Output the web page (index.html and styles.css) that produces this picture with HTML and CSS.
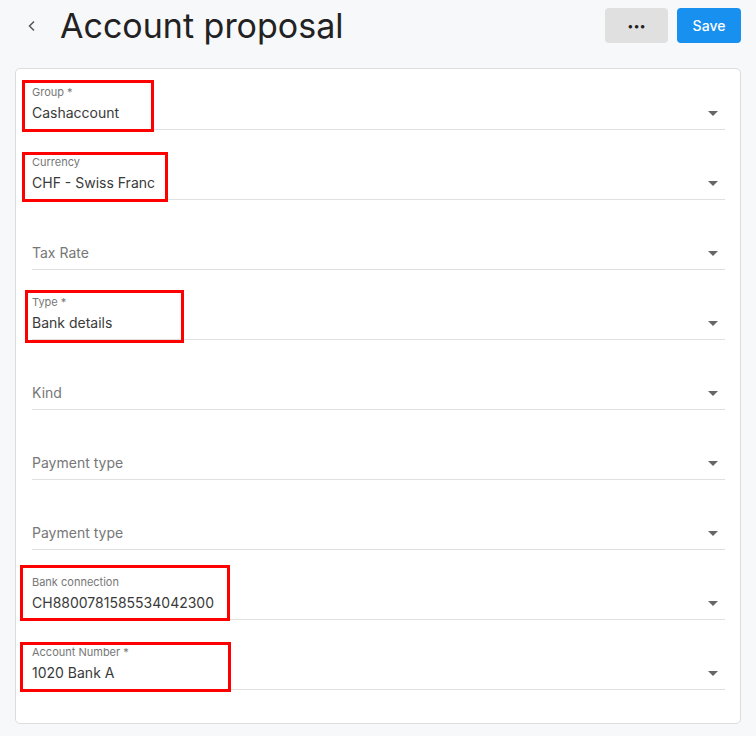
FILE: index.html
```html
<!DOCTYPE html>
<html lang="en">
<head>
    <meta charset="UTF-8">
    <meta name="viewport" content="width=device-width, initial-scale=1.0">
    <title>Account proposal</title>
    <link rel="stylesheet" href="styles.css">
</head>
<body>
    <div class="topbar">
        <div class="title-wrap">
            <span class="back">
                <svg width="10" height="12" viewBox="0 0 10 12"><path d="M7 1.5 L2.5 6 L7 10.5" fill="none" stroke="#555" stroke-width="1.5"/></svg>
            </span>
            <h1>Account proposal</h1>
        </div>
        <div class="actions">
            <button class="btn btn-more">&bull;&bull;&bull;</button>
            <button class="btn btn-save">Save</button>
        </div>
    </div>
    <div class="card">
        <div class="field">
            <div class="mark mark-1"></div>
            <div class="label">Group *</div>
            <div class="value">Cashaccount</div>
            <span class="arrow"></span>
        </div>
        <div class="field">
            <div class="mark mark-2"></div>
            <div class="label">Currency</div>
            <div class="value">CHF - Swiss Franc</div>
            <span class="arrow"></span>
        </div>
        <div class="field">
            <div class="label"></div>
            <div class="value empty">Tax Rate</div>
            <span class="arrow"></span>
        </div>
        <div class="field">
            <div class="mark mark-3"></div>
            <div class="label">Type *</div>
            <div class="value">Bank details</div>
            <span class="arrow"></span>
        </div>
        <div class="field">
            <div class="label"></div>
            <div class="value empty">Kind</div>
            <span class="arrow"></span>
        </div>
        <div class="field">
            <div class="label"></div>
            <div class="value empty">Payment type</div>
            <span class="arrow"></span>
        </div>
        <div class="field">
            <div class="label"></div>
            <div class="value empty">Payment type</div>
            <span class="arrow"></span>
        </div>
        <div class="field">
            <div class="mark mark-4"></div>
            <div class="label">Bank connection</div>
            <div class="value">CH8800781585534042300</div>
            <span class="arrow"></span>
        </div>
        <div class="field">
            <div class="mark mark-5"></div>
            <div class="label">Account Number *</div>
            <div class="value">1020 Bank A</div>
            <span class="arrow"></span>
        </div>
    </div>
</body>
</html>
```

FILE: styles.css
```css
body {
    margin: 0;
    font-family: Inter, 'Noto Sans', sans-serif;
    background: #f7f8f9;
    color: #333;
}
.topbar {
    display: flex;
    justify-content: space-between;
    align-items: center;
    padding: 8px 15px 0 27px;
    height: 35px;
}
.title-wrap {
    display: flex;
    align-items: center;
}
.back {
    display: flex;
    width: 12px;
    margin-right: 21px;
}
.topbar h1 {
    margin: 0;
    font-size: 34px;
    font-weight: 400;
    color: #222;
    line-height: 38px;
}
.actions {
    display: flex;
    gap: 9px;
}
.btn {
    height: 35px;
    border: none;
    border-radius: 4px;
    font-family: inherit;
    font-size: 14px;
    cursor: pointer;
}
.btn-more {
    width: 63px;
    background: #e0e0e0;
    color: #222;
    letter-spacing: 0;
    font-size: 11px;
}
.btn-save {
    width: 64px;
    background: #1890f0;
    color: white;
    font-weight: 500;
}
.card {
    margin: 25px 15px 0 15px;
    background: white;
    border: 1px solid #dcdcdc;
    border-radius: 5px;
    padding: 16px 15px 33px 16px;
    display: flex;
    flex-direction: column;
    gap: 25px;
}
.field {
    position: relative;
    border-bottom: 1px solid #e0e0e0;
    padding-bottom: 6px;
}
.label {
    height: 14px;
    font-size: 11px;
    line-height: 14px;
    color: #777;
    margin-bottom: 4px;
}
.value {
    font-size: 14px;
    line-height: 20px;
    color: #3a3a3a;
}
.value.empty {
    color: #777;
}
.arrow {
    position: absolute;
    right: 7px;
    top: 26px;
    width: 0;
    height: 0;
    border-left: 5px solid transparent;
    border-right: 5px solid transparent;
    border-top: 5px solid #666;
}
.mark {
    position: absolute;
    border: 3px solid #f00;
    box-sizing: border-box;
}
.mark-1 { left: -10px; top: -5px; width: 132px; height: 52px; }
.mark-2 { left: -10px; top: -3px; width: 146px; height: 50px; }
.mark-3 { left: -7px; top: -5px; width: 159px; height: 53px; }
.mark-4 { left: -12px; top: -10px; width: 210px; height: 56px; }
.mark-5 { left: -12px; top: -3px; width: 211px; height: 50px; }
```
